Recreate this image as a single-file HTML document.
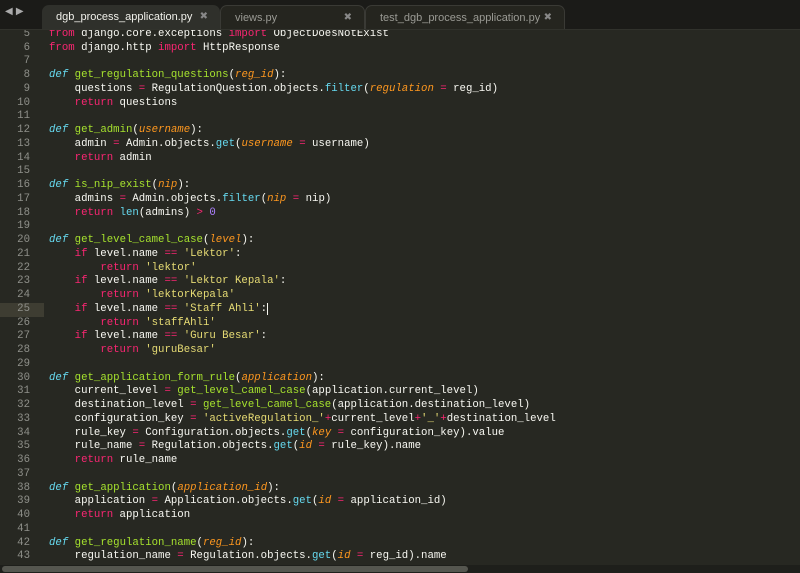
<!DOCTYPE html>
<html><head><meta charset="utf-8"><style>
body{margin:0;width:800px;height:573px;overflow:hidden;background:#272822;position:relative;font-family:"Liberation Mono",monospace;}
#tabs{position:absolute;left:0;top:0;width:800px;height:29px;background:#1b1b18;z-index:5;border-bottom:1px solid #31322c}
.tab{position:absolute;top:5px;height:24px;border-radius:7px 7px 0 0;font-family:"Liberation Sans",sans-serif;font-size:11px;line-height:24px;padding-left:14px;box-sizing:border-box}
.t1{left:42px;width:178px;background:#2f302b;color:#f0f0ea;z-index:3}
.t2{left:220px;width:145px;background:#25251f;color:#9a9a94;border:1px solid #3a3a35;border-bottom:none}
.t3{left:365px;width:200px;background:#25251f;color:#9a9a94;border:1px solid #3a3a35;border-bottom:none}
.x{position:absolute;right:12px;top:0;font-size:10px;color:#888}
#code{position:absolute;left:0;top:27.8px;width:800px}
.l{height:13.76px;line-height:13.76px;font-size:10.7px;white-space:pre;position:relative;color:#f8f8f2}
.n{position:absolute;left:0;width:30px;text-align:right;color:#8f908a}
.c{position:absolute;left:49px}
.cur .n{background:#3e3d32;width:44px;padding-right:14px;box-sizing:border-box;left:0}
.k{color:#f92672}.d{color:#66d9ef;font-style:italic}.f{color:#a6e22e}.p{color:#fd971f;font-style:italic}.s{color:#e6db74}.b{color:#66d9ef}.m{color:#ae81ff}
#sb{position:absolute;left:0;top:565px;width:800px;height:8px;background:#1e1f1b}
#sb div{position:absolute;left:2px;top:1px;width:466px;height:6px;border-radius:3px;background:#55564f}
</style></head><body>
<div id="tabs">
<div style="position:absolute;left:5px;top:6px;color:#aaa;font-size:10px;font-family:'DejaVu Sans'">◀ ▶</div>
<div class="tab t1">dgb_process_application.py<span class="x">✖</span></div>
<div class="tab t2">views.py<span class="x">✖</span></div>
<div class="tab t3">test_dgb_process_application.py<span class="x">✖</span></div>
</div>
<div id="code">
<div class="l"><span class="n">5</span><span class="c"><span class="k">from</span> django.core.exceptions <span class="k">import</span> ObjectDoesNotExist</span></div>
<div class="l"><span class="n">6</span><span class="c"><span class="k">from</span> django.http <span class="k">import</span> HttpResponse</span></div>
<div class="l"><span class="n">7</span></div>
<div class="l"><span class="n">8</span><span class="c"><span class="d">def</span> <span class="f">get_regulation_questions</span>(<span class="p">reg_id</span>):</span></div>
<div class="l"><span class="n">9</span><span class="c">    questions <span class="k">=</span> RegulationQuestion.objects.<span class="b">filter</span>(<span class="p">regulation</span> <span class="k">=</span> reg_id)</span></div>
<div class="l"><span class="n">10</span><span class="c">    <span class="k">return</span> questions</span></div>
<div class="l"><span class="n">11</span></div>
<div class="l"><span class="n">12</span><span class="c"><span class="d">def</span> <span class="f">get_admin</span>(<span class="p">username</span>):</span></div>
<div class="l"><span class="n">13</span><span class="c">    admin <span class="k">=</span> Admin.objects.<span class="b">get</span>(<span class="p">username</span> <span class="k">=</span> username)</span></div>
<div class="l"><span class="n">14</span><span class="c">    <span class="k">return</span> admin</span></div>
<div class="l"><span class="n">15</span></div>
<div class="l"><span class="n">16</span><span class="c"><span class="d">def</span> <span class="f">is_nip_exist</span>(<span class="p">nip</span>):</span></div>
<div class="l"><span class="n">17</span><span class="c">    admins <span class="k">=</span> Admin.objects.<span class="b">filter</span>(<span class="p">nip</span> <span class="k">=</span> nip)</span></div>
<div class="l"><span class="n">18</span><span class="c">    <span class="k">return</span> <span class="b">len</span>(admins) <span class="k">&gt;</span> <span class="m">0</span></span></div>
<div class="l"><span class="n">19</span></div>
<div class="l"><span class="n">20</span><span class="c"><span class="d">def</span> <span class="f">get_level_camel_case</span>(<span class="p">level</span>):</span></div>
<div class="l"><span class="n">21</span><span class="c">    <span class="k">if</span> level.name <span class="k">==</span> <span class="s">'Lektor'</span>:</span></div>
<div class="l"><span class="n">22</span><span class="c">        <span class="k">return</span> <span class="s">'lektor'</span></span></div>
<div class="l"><span class="n">23</span><span class="c">    <span class="k">if</span> level.name <span class="k">==</span> <span class="s">'Lektor Kepala'</span>:</span></div>
<div class="l"><span class="n">24</span><span class="c">        <span class="k">return</span> <span class="s">'lektorKepala'</span></span></div>
<div class="l cur"><span class="n">25</span><span class="c">    <span class="k">if</span> level.name <span class="k">==</span> <span class="s">'Staff Ahli'</span>:<span style="border-left:1px solid #f8f8f0"></span></span></div>
<div class="l"><span class="n">26</span><span class="c">        <span class="k">return</span> <span class="s">'staffAhli'</span></span></div>
<div class="l"><span class="n">27</span><span class="c">    <span class="k">if</span> level.name <span class="k">==</span> <span class="s">'Guru Besar'</span>:</span></div>
<div class="l"><span class="n">28</span><span class="c">        <span class="k">return</span> <span class="s">'guruBesar'</span></span></div>
<div class="l"><span class="n">29</span></div>
<div class="l"><span class="n">30</span><span class="c"><span class="d">def</span> <span class="f">get_application_form_rule</span>(<span class="p">application</span>):</span></div>
<div class="l"><span class="n">31</span><span class="c">    current_level <span class="k">=</span> <span class="f">get_level_camel_case</span>(application.current_level)</span></div>
<div class="l"><span class="n">32</span><span class="c">    destination_level <span class="k">=</span> <span class="f">get_level_camel_case</span>(application.destination_level)</span></div>
<div class="l"><span class="n">33</span><span class="c">    configuration_key <span class="k">=</span> <span class="s">'activeRegulation_'</span><span class="k">+</span>current_level<span class="k">+</span><span class="s">'_'</span><span class="k">+</span>destination_level</span></div>
<div class="l"><span class="n">34</span><span class="c">    rule_key <span class="k">=</span> Configuration.objects.<span class="b">get</span>(<span class="p">key</span> <span class="k">=</span> configuration_key).value</span></div>
<div class="l"><span class="n">35</span><span class="c">    rule_name <span class="k">=</span> Regulation.objects.<span class="b">get</span>(<span class="p">id</span> <span class="k">=</span> rule_key).name</span></div>
<div class="l"><span class="n">36</span><span class="c">    <span class="k">return</span> rule_name</span></div>
<div class="l"><span class="n">37</span></div>
<div class="l"><span class="n">38</span><span class="c"><span class="d">def</span> <span class="f">get_application</span>(<span class="p">application_id</span>):</span></div>
<div class="l"><span class="n">39</span><span class="c">    application <span class="k">=</span> Application.objects.<span class="b">get</span>(<span class="p">id</span> <span class="k">=</span> application_id)</span></div>
<div class="l"><span class="n">40</span><span class="c">    <span class="k">return</span> application</span></div>
<div class="l"><span class="n">41</span></div>
<div class="l"><span class="n">42</span><span class="c"><span class="d">def</span> <span class="f">get_regulation_name</span>(<span class="p">reg_id</span>):</span></div>
<div class="l"><span class="n">43</span><span class="c">    regulation_name <span class="k">=</span> Regulation.objects.<span class="b">get</span>(<span class="p">id</span> <span class="k">=</span> reg_id).name</span></div>
</div>
<div id="sb"><div></div></div>
</body></html>
